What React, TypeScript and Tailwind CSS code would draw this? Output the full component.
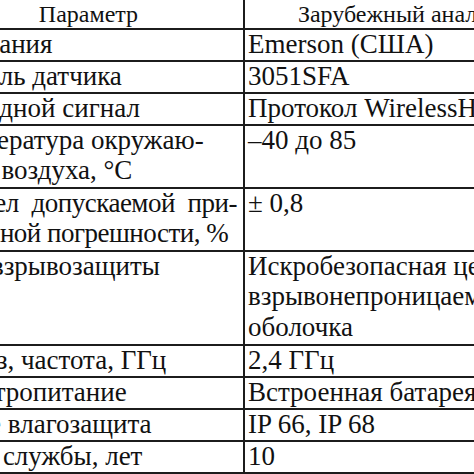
const rows: { left: React.ReactNode; right: React.ReactNode; tall?: boolean }[] = [
  { left: "Компания", right: "Emerson (США)" },
  { left: "Модель датчика", right: "3051SFA" },
  { left: "Выходной сигнал", right: "Протокол WirelessHART" },
  {
    left: (
      <>
        <div>Температура окружаю-</div>
        <div>щего воздуха, °С</div>
      </>
    ),
    right: "–40 до 85",
    tall: true,
  },
  {
    left: (
      <>
        <div className="text-justify [text-align-last:justify] tracking-[-0.5px]">Предел допускаемой при-</div>
        <div className="tracking-[-0.5px]">веденной погрешности, %</div>
      </>
    ),
    right: "± 0,8",
    tall: true,
  },
  {
    left: "Вид взрывозащиты",
    right: (
      <>
        <div>Искробезопасная цепь,</div>
        <div>взрывонепроницаемая</div>
        <div>оболочка</div>
      </>
    ),
    tall: true,
  },
  { left: "Образ, частота, ГГц", right: "2,4 ГГц" },
  { left: "Электропитание", right: "Встроенная батарея" },
  { left: "Пыле влагозащита", right: "IP 66, IP 68" },
  { left: "Срок службы, лет", right: "10" },
];

export default function App() {
  return (
    <div className="w-[474px] h-[474px] overflow-hidden bg-white">
      <div
        className="-ml-[68px] -mt-[2px] w-[620px] border-t-2 border-l-2 border-[#1c1c1c] text-[#111] whitespace-nowrap"
        style={{ fontFamily: '"Liberation Serif", "Times New Roman", serif' }}
      >
        {/* Header */}
        <div className="flex border-b-2 border-[#1c1c1c] text-[24px] leading-[28px]">
          <div className="w-[311px] shrink-0 border-r-2 border-[#1c1c1c] text-center">Параметр</div>
          <div className="flex-1 text-center">Зарубежный аналог</div>
        </div>

        {rows.map((row, i) => (
          <div
            key={i}
            className={`flex border-b-2 border-[#1c1c1c] text-[27px] ${row.tall ? "leading-[30.6px]" : "leading-[30px]"}`}
          >
            <div className="w-[311px] shrink-0 border-r-2 border-[#1c1c1c] pl-1 pr-[6px]">
              <div className="-mt-[1.5px] mb-[1.5px]">{row.left}</div>
            </div>
            <div className="flex-1 pl-[3px]">
              <div className="-mt-[1.5px] mb-[1.5px]">{row.right}</div>
            </div>
          </div>
        ))}
      </div>
    </div>
  );
}
